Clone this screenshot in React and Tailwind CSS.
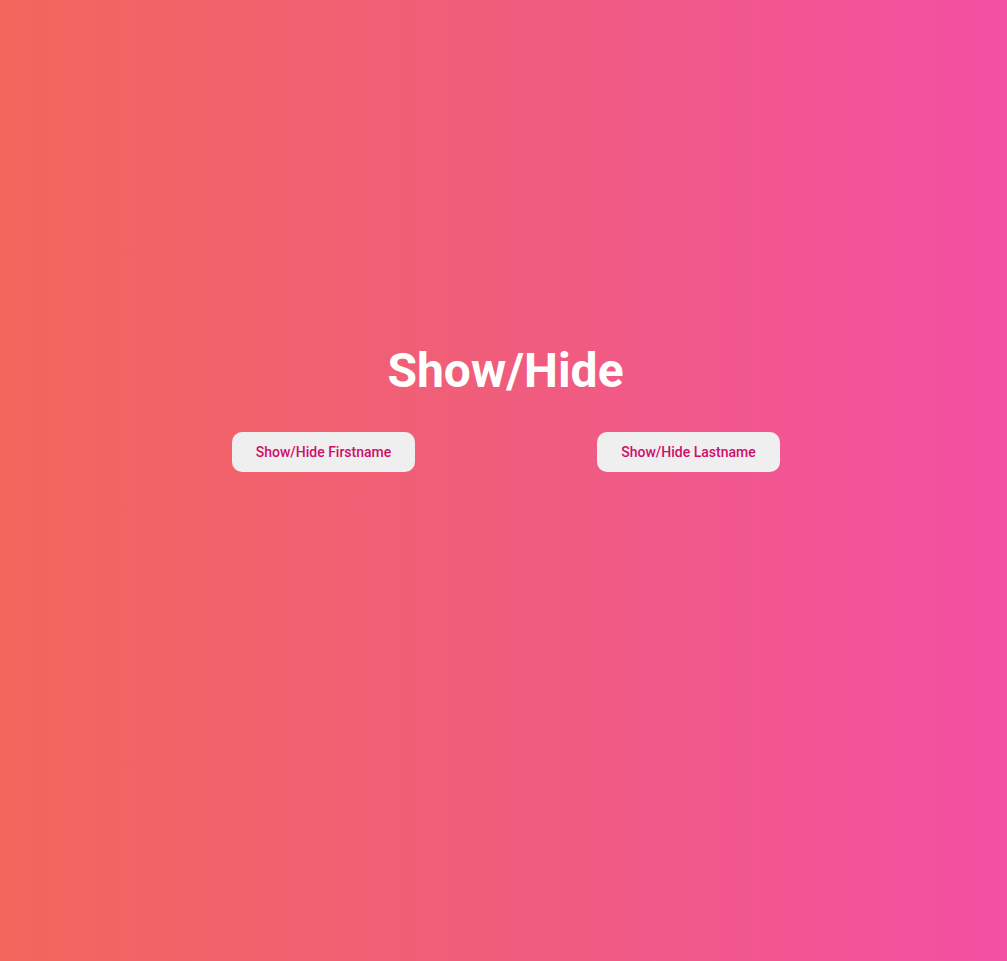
export default function App() {
  return (
    <div
      className="min-h-screen bg-gradient-to-r from-[#f2665c] via-[#f05d7c] to-[#f34fa3] pt-[340px]"
      style={{ fontFamily: 'Roboto, "Liberation Sans", sans-serif' }}
    >
      <h1 className="translate-x-[2px] text-center text-5xl leading-[62px] font-bold text-white">Show/Hide</h1>
      <div className="mx-auto mt-[30px] grid w-[728px] translate-x-[3px] grid-cols-2">
        <div className="flex justify-center">
          <button className="-translate-x-[1px] rounded-[10px] bg-[#efefef] px-6 py-[10px] text-sm font-medium text-[#cf0d6b]">
            Show/Hide Firstname
          </button>
        </div>
        <div className="flex justify-center">
          <button className="rounded-[10px] bg-[#efefef] px-6 py-[10px] text-sm font-medium text-[#cf0d6b]">
            Show/Hide Lastname
          </button>
        </div>
      </div>
    </div>
  );
}
